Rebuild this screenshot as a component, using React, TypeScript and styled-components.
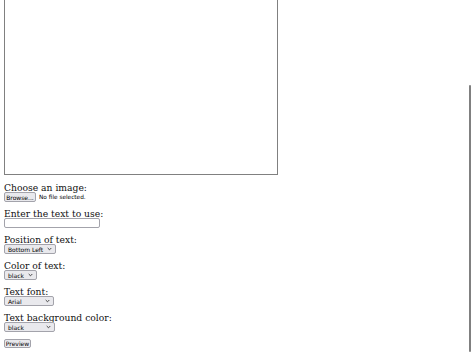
import React, { FC, ReactElement } from "react";
import styled, { createGlobalStyle } from "styled-components";

const GlobalStyle = createGlobalStyle`
  html, body {
    margin: 0;
    padding: 0;
    background: #ffffff;
    overflow: hidden;
  }
`;

type Field = { label: string; value: string; width: number };

const selects: Field[] = [
  { label: "Position of text:", value: "Bottom Left", width: 52 },
  { label: "Color of text:", value: "black", width: 33 },
  { label: "Text font:", value: "Arial", width: 50 },
  { label: "Text background color:", value: "black", width: 51 },
];

const Chevron: FC = (): ReactElement => (
  <svg width="5" height="4" viewBox="0 0 5 4">
    <polyline
      points="0.7,1 2.5,2.8 4.3,1"
      fill="none"
      stroke="#333"
      strokeWidth="0.9"
    />
  </svg>
);

const App: FC = (): ReactElement => {
  return (
    <>
      <GlobalStyle />
      <Page>
        <Canvas />
        <Group>
          <Label>Choose an image:</Label>
          <FileRow>
            <Button>Browse...</Button>
            <FileName>No file selected.</FileName>
          </FileRow>
        </Group>
        <Group>
          <Label>Enter the text to use:</Label>
          <TextInput type="text" />
        </Group>
        {selects.map((s) => (
          <Group key={s.label}>
            <Label>{s.label}</Label>
            <Select style={{ width: s.width }}>
              <span>{s.value}</span>
              <Chevron />
            </Select>
          </Group>
        ))}
        <PreviewButton>Preview</PreviewButton>
      </Page>
      <ScrollThumb />
    </>
  );
};

export default App;

const Page = styled.main`
  height: 352px;
  box-sizing: border-box;
  padding: 0 4px 4px 4px;
  display: flex;
  flex-direction: column;
  justify-content: flex-end;
  align-items: flex-start;
  overflow: hidden;
  font-family: "DejaVu Serif", serif;
  font-size: 9.2px;
  color: #111;
`;

const Canvas = styled.div`
  flex: 0 0 auto;
  width: 274px;
  height: 300px;
  box-sizing: border-box;
  border: 1px solid #808080;
  margin-bottom: 7px;
`;

const Group = styled.section`
  display: flex;
  flex-direction: column;
  align-items: flex-start;
  margin-bottom: 6px;
`;

const Label = styled.div`
  height: 9px;
  line-height: 12px;
  white-space: nowrap;
`;

const FileRow = styled.div`
  display: flex;
  align-items: center;
  gap: 3px;
  margin-top: 1px;
`;

const Control = styled.div`
  box-sizing: border-box;
  height: 10px;
  display: inline-flex;
  align-items: center;
  font-family: "DejaVu Sans", sans-serif;
  font-size: 6px;
  color: #000;
  background: #e9e9ed;
  border: 1px solid #a3a3ab;
  border-radius: 2px;
  white-space: nowrap;
`;

const Button = styled(Control)`
  padding: 0 1px;
  width: 32px;
  justify-content: center;
`;

const FileName = styled.span`
  font-family: "DejaVu Sans", sans-serif;
  font-size: 5.8px;
  color: #000;
`;

const TextInput = styled.input`
  box-sizing: border-box;
  width: 96px;
  height: 10px;
  margin: 1px 0 0 0;
  padding: 0;
  background: #ffffff;
  border: 1px solid #a3a3ab;
  border-radius: 2px;
  outline: none;
`;

const Select = styled(Control)`
  margin-top: 1px;
  padding: 0 3px 0 3px;
  justify-content: space-between;
`;

const PreviewButton = styled(Control)`
  height: 9px;
  width: 27px;
  justify-content: center;
  margin-top: 1px;
`;

const ScrollThumb = styled.div`
  position: fixed;
  top: 85px;
  right: 3px;
  width: 2px;
  bottom: 0;
  background: #808080;
  border-radius: 1px;
`;
